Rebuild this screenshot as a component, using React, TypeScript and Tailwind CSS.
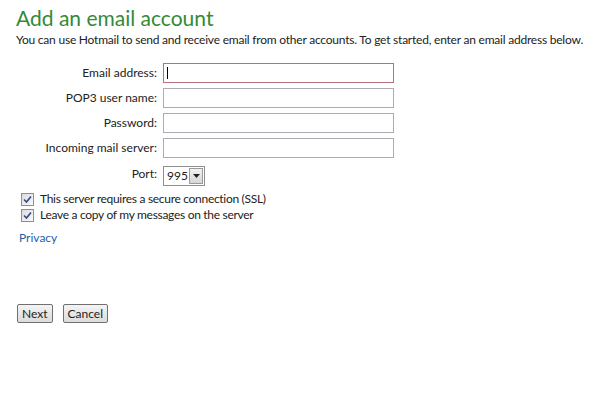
import React from "react";

const font = { fontFamily: 'Lato, "Noto Sans", sans-serif' };

function Field({ label, first }: { label: string; first?: boolean }) {
  return (
    <>
      <label className="text-right text-[12px] text-[#222] leading-[20px]">{label}</label>
      <div
        className={
          "h-[20px] w-[231px] bg-white border " +
          (first ? "border-[#b4707c]" : "border-[#abadb3]")
        }
      >
        {first && <div className="ml-[3px] mt-[3px] h-[12px] w-px bg-black" />}
      </div>
    </>
  );
}

function Check({ label }: { label: string }) {
  return (
    <div className="flex items-center gap-[6px] h-[16px]">
      <div className="w-[13px] h-[13px] border border-[#8f8f8f] bg-gradient-to-br from-[#dcdcdc] to-[#fafafa] flex items-center justify-center">
        <svg width="9" height="9" viewBox="0 0 9 9">
          <path d="M1 4.5 L3.5 7 L8 1.5" stroke="#2f4a8a" strokeWidth="1.6" fill="none" />
        </svg>
      </div>
      <span className="text-[12px] text-[#222] tracking-[-0.3px]">{label}</span>
    </div>
  );
}

export default function App() {
  return (
    <div className="w-[590px] h-[401px] bg-white overflow-hidden" style={font}>
      <div className="pl-[16px] pt-[4px]">
        <h1 className="text-[21px] leading-[28px] text-[#338a38]">Add an email account</h1>
        <p className="text-[12px] leading-[16px] text-[#222] tracking-[-0.22px] whitespace-nowrap">
          You can use Hotmail to send and receive email from other accounts. To get started, enter an email address below.
        </p>
      </div>

      <div className="grid grid-cols-[157px_auto] gap-x-[6px] gap-y-[5px] mt-[15px] items-center">
        <Field label="Email address:" first />
        <Field label="POP3 user name:" />
        <Field label="Password:" />
        <Field label="Incoming mail server:" />
        <label className="text-right text-[12px] text-[#222] leading-[20px] mt-[1px] self-start">Port:</label>
        <div className="mt-[3px] flex h-[20px] w-[42px] border border-[#8e8e8e] bg-white">
          <span className="text-[12px] leading-[18px] pl-[3px] text-[#222] flex-1">995</span>
          <div className="w-[14px] my-[1px] mr-[1px] border border-[#9a9a9a] bg-gradient-to-b from-[#f2f2f2] to-[#d6d6d6] flex items-center justify-center">
            <svg width="7" height="4" viewBox="0 0 7 4">
              <path d="M0 0 H7 L3.5 4 Z" fill="#222" />
            </svg>
          </div>
        </div>
      </div>

      <div className="pl-[21px] mt-[5px] flex flex-col">
        <Check label="This server requires a secure connection (SSL)" />
        <Check label="Leave a copy of my messages on the server" />
      </div>

      <div className="pl-[19px] mt-[1px]">
        <a className="text-[12px] text-[#1d5fa8]">Privacy</a>
      </div>

      <div className="pl-[17px] mt-[56px] flex gap-[10px]">
        <button className="h-[19px] px-[4px] text-[12px] leading-[17px] text-[#222] border border-[#707070] rounded-[2px] bg-gradient-to-b from-[#f4f4f4] to-[#dcdcdc]">
          Next
        </button>
        <button className="h-[19px] px-[4px] text-[12px] leading-[17px] text-[#222] border border-[#707070] rounded-[2px] bg-gradient-to-b from-[#f4f4f4] to-[#dcdcdc]">
          Cancel
        </button>
      </div>
    </div>
  );
}
